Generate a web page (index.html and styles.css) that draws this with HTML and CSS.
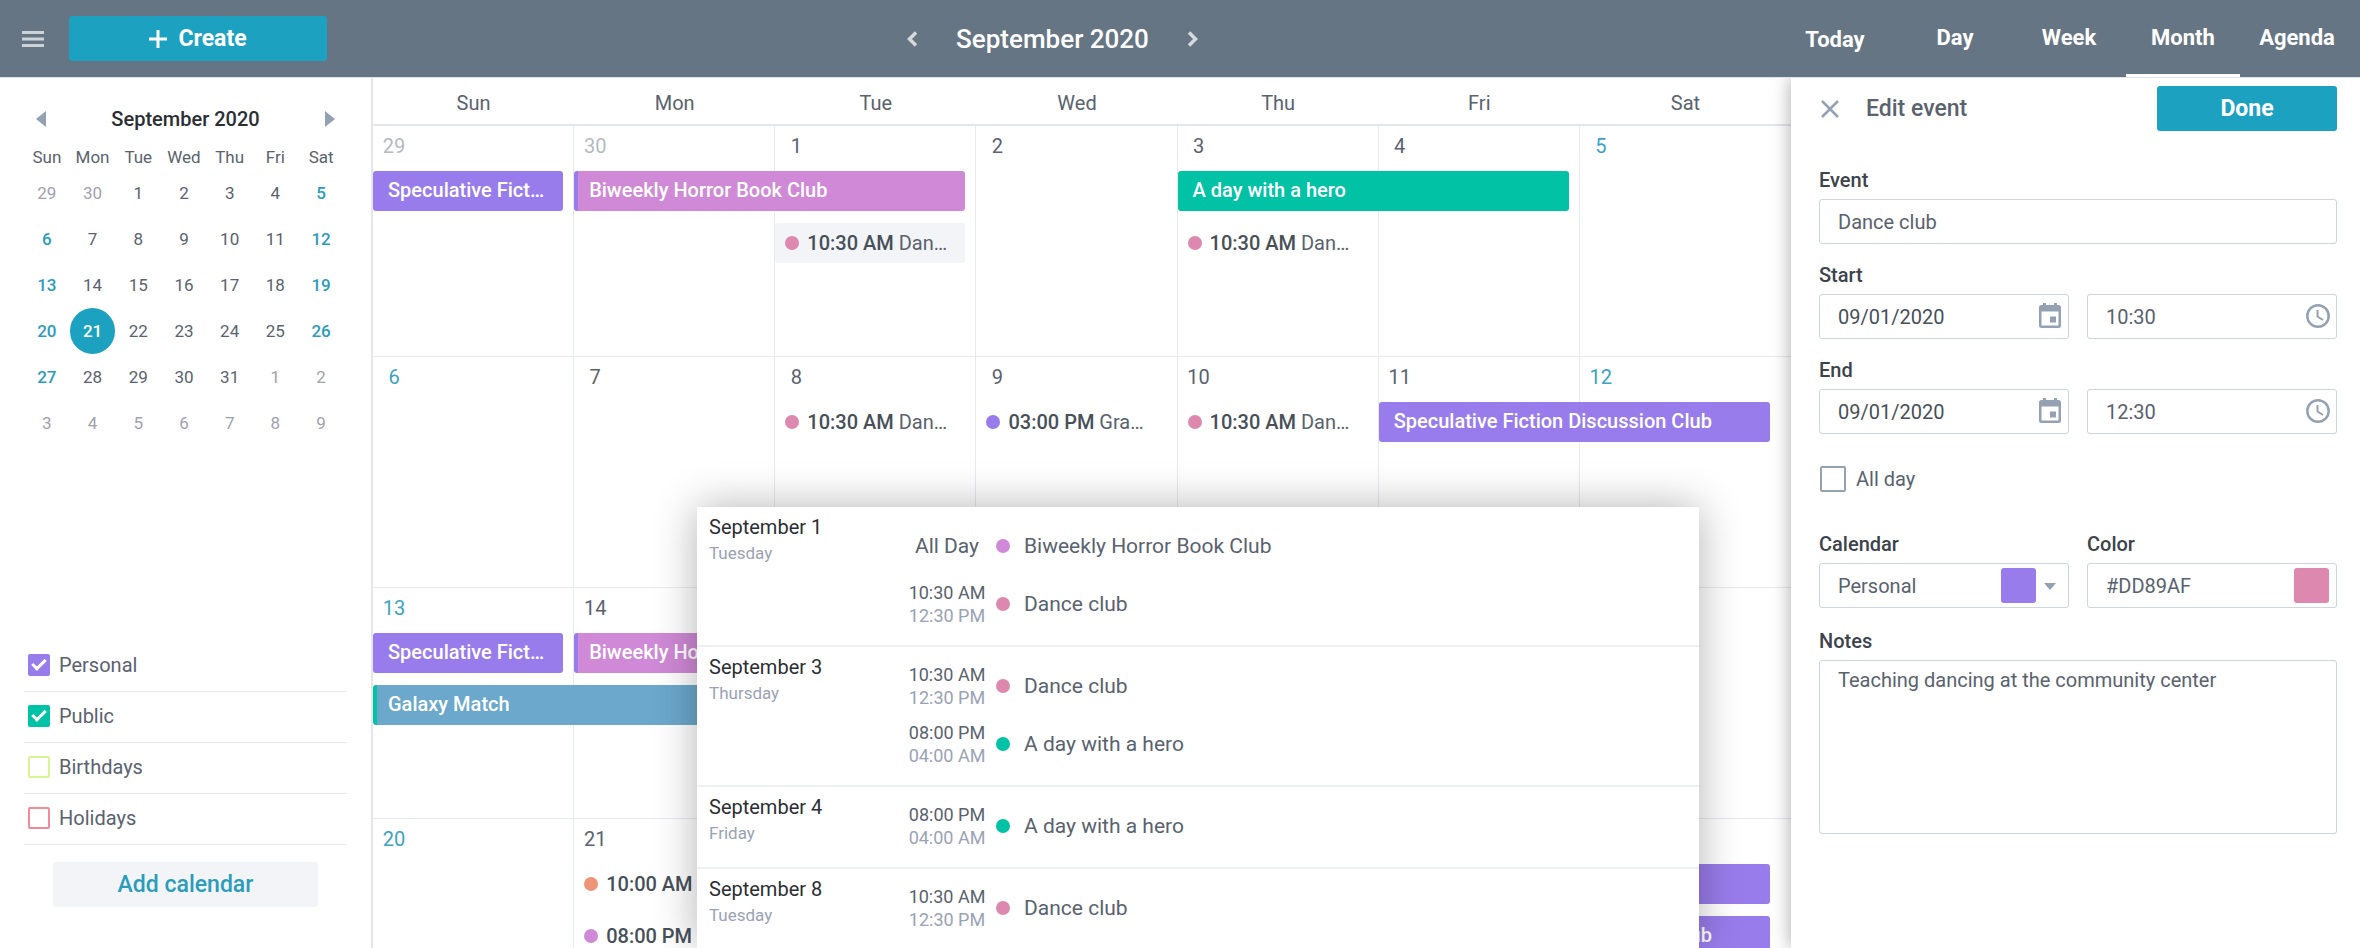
FILE: index.html
```html
<!DOCTYPE html>
<html lang="en">
<head>
<meta charset="UTF-8">
<meta name="viewport" content="width=device-width, initial-scale=1.0">
<title>Event Calendar</title>
<link rel="stylesheet" href="styles.css">
</head>
<body>
<header class="topbar">
  <button class="icon-btn menu-btn" aria-label="Toggle sidebar">
    <svg width="24" height="16" viewBox="0 0 24 16"><path d="M1 1.5h22M1 8h22M1 14.5h22" stroke="#cdd3d9" stroke-width="3"/></svg>
  </button>
  <button class="btn btn-create">
    <svg width="18" height="18" viewBox="0 0 18 18"><path d="M9 0v18M0 9h18" stroke="#fff" stroke-width="3"/></svg>
    Create
  </button>
  <div class="period">
    <button class="icon-btn" aria-label="Previous">
      <svg width="12" height="16" viewBox="0 0 12 16"><path d="M10 1.500L3.500 8l6.500 6.500" fill="none" stroke="#d5dade" stroke-width="3.500"/></svg>
    </button>
    <h1 class="period-title">September 2020</h1>
    <button class="icon-btn" aria-label="Next">
      <svg width="12" height="16" viewBox="0 0 12 16"><path d="M2 1.500L8.500 8 2 14.500" fill="none" stroke="#d5dade" stroke-width="3.500"/></svg>
    </button>
  </div>
  <button class="tab today-btn">Today</button>
  <nav class="tabs">
    <button class="tab">Day</button>
    <button class="tab">Week</button>
    <button class="tab active">Month</button>
    <button class="tab">Agenda</button>
  </nav>
</header>

<div class="layout">
  <aside class="sidebar">
    <section class="mini">
      <div class="mini-header">
        <button class="icon-btn" aria-label="Previous month">
          <svg width="10" height="16" viewBox="0 0 10 16"><path d="M10 0v16L0 8z" fill="#94a1b3"/></svg>
        </button>
        <span class="mini-title">September 2020</span>
        <button class="icon-btn" aria-label="Next month">
          <svg width="10" height="16" viewBox="0 0 10 16"><path d="M0 0v16l10-8z" fill="#94a1b3"/></svg>
        </button>
      </div>
      <table class="mini-table">
        <thead>
          <tr><th>Sun</th><th>Mon</th><th>Tue</th><th>Wed</th><th>Thu</th><th>Fri</th><th>Sat</th></tr>
        </thead>
        <tbody>
          <tr><td class="other">29</td><td class="other">30</td><td>1</td><td>2</td><td>3</td><td>4</td><td class="weekend">5</td></tr>
          <tr><td class="weekend">6</td><td>7</td><td>8</td><td>9</td><td>10</td><td>11</td><td class="weekend">12</td></tr>
          <tr><td class="weekend">13</td><td>14</td><td>15</td><td>16</td><td>17</td><td>18</td><td class="weekend">19</td></tr>
          <tr><td class="weekend">20</td><td class="selected">21</td><td>22</td><td>23</td><td>24</td><td>25</td><td class="weekend">26</td></tr>
          <tr><td class="weekend">27</td><td>28</td><td>29</td><td>30</td><td>31</td><td class="other">1</td><td class="other">2</td></tr>
          <tr><td class="other">3</td><td class="other">4</td><td class="other">5</td><td class="other">6</td><td class="other">7</td><td class="other">8</td><td class="other">9</td></tr>
        </tbody>
      </table>
    </section>

    <section class="calendars">
      <label class="calendar-item"><input type="checkbox" class="check check-purple" checked>Personal</label>
      <label class="calendar-item"><input type="checkbox" class="check check-green" checked>Public</label>
      <label class="calendar-item"><input type="checkbox" class="check check-lime">Birthdays</label>
      <label class="calendar-item"><input type="checkbox" class="check check-red">Holidays</label>
      <button class="btn btn-light">Add calendar</button>
    </section>
  </aside>

  <main class="month">
    <div class="weekdays">
      <div>Sun</div><div>Mon</div><div>Tue</div><div>Wed</div><div>Thu</div><div>Fri</div><div>Sat</div>
    </div>

    <div class="week">
      <div class="cell col-1 other"><span>29</span></div>
      <div class="cell col-2 other"><span>30</span></div>
      <div class="cell col-3"><span>1</span></div>
      <div class="cell col-4"><span>2</span></div>
      <div class="cell col-5"><span>3</span></div>
      <div class="cell col-6"><span>4</span></div>
      <div class="cell col-7 weekend"><span>5</span></div>
      <div class="bar slot-1 col-1 purple">Speculative Fiction Discussion Club</div>
      <div class="bar slot-1 col-2 span-2 violet">Biweekly Horror Book Club</div>
      <div class="bar slot-1 col-5 span-2 green">A day with a hero</div>
      <div class="event slot-2 col-3 active"><i class="dot pink"></i><p><b>10:30 AM</b> Dance club</p></div>
      <div class="event slot-2 col-5"><i class="dot pink"></i><p><b>10:30 AM</b> Dance club</p></div>
    </div>

    <div class="week">
      <div class="cell col-1 weekend"><span>6</span></div>
      <div class="cell col-2"><span>7</span></div>
      <div class="cell col-3"><span>8</span></div>
      <div class="cell col-4"><span>9</span></div>
      <div class="cell col-5"><span>10</span></div>
      <div class="cell col-6"><span>11</span></div>
      <div class="cell col-7 weekend"><span>12</span></div>
      <div class="event slot-1 col-3"><i class="dot pink"></i><p><b>10:30 AM</b> Dance club</p></div>
      <div class="event slot-1 col-4"><i class="dot purple"></i><p><b>03:00 PM</b> Grand opening</p></div>
      <div class="event slot-1 col-5"><i class="dot pink"></i><p><b>10:30 AM</b> Dance club</p></div>
      <div class="bar slot-1 col-6 span-2 purple">Speculative Fiction Discussion Club</div>
    </div>

    <div class="week">
      <div class="cell col-1 weekend"><span>13</span></div>
      <div class="cell col-2"><span>14</span></div>
      <div class="cell col-3"></div>
      <div class="cell col-4"></div>
      <div class="cell col-5"></div>
      <div class="cell col-6"></div>
      <div class="cell col-7"></div>
      <div class="bar slot-1 col-1 purple">Speculative Fiction Discussion Club</div>
      <div class="bar slot-1 col-2 span-2 violet">Biweekly Horror Book Club</div>
      <div class="bar slot-2 col-1 span-3 blue">Galaxy Match</div>
    </div>

    <div class="week">
      <div class="cell col-1 weekend"><span>20</span></div>
      <div class="cell col-2"><span>21</span></div>
      <div class="cell col-3"></div>
      <div class="cell col-4"></div>
      <div class="cell col-5"></div>
      <div class="cell col-6"></div>
      <div class="cell col-7"></div>
      <div class="event slot-1 col-2"><i class="dot orange"></i><p><b>10:00 AM</b></p></div>
      <div class="event slot-2 col-2"><i class="dot violet"></i><p><b>08:00 PM</b></p></div>
      <div class="bar slot-1 col-5 span-3 purple"></div>
      <div class="bar slot-2 col-6 span-2 purple">Speculative Fiction Discussion Club</div>
    </div>

    <!-- agenda list over the month grid -->
    <div class="agenda">
      <section class="agenda-day">
        <div class="agenda-date"><h2>September 1</h2><p>Tuesday</p></div>
        <ul class="agenda-list">
          <li><div class="time all-day">All Day</div><i class="dot violet"></i>Biweekly Horror Book Club</li>
          <li><div class="time">10:30 AM<small>12:30 PM</small></div><i class="dot pink"></i>Dance club</li>
        </ul>
      </section>
      <section class="agenda-day">
        <div class="agenda-date"><h2>September 3</h2><p>Thursday</p></div>
        <ul class="agenda-list">
          <li><div class="time">10:30 AM<small>12:30 PM</small></div><i class="dot pink"></i>Dance club</li>
          <li><div class="time">08:00 PM<small>04:00 AM</small></div><i class="dot green"></i>A day with a hero</li>
        </ul>
      </section>
      <section class="agenda-day">
        <div class="agenda-date"><h2>September 4</h2><p>Friday</p></div>
        <ul class="agenda-list">
          <li><div class="time">08:00 PM<small>04:00 AM</small></div><i class="dot green"></i>A day with a hero</li>
        </ul>
      </section>
      <section class="agenda-day">
        <div class="agenda-date"><h2>September 8</h2><p>Tuesday</p></div>
        <ul class="agenda-list">
          <li><div class="time">10:30 AM<small>12:30 PM</small></div><i class="dot pink"></i>Dance club</li>
        </ul>
      </section>
    </div>
  </main>

  <form class="editor">
    <div class="editor-header">
      <button type="button" class="icon-btn" aria-label="Close">
        <svg width="18" height="18" viewBox="0 0 18 18"><path d="M1 1l16 16M17 1L1 17" stroke="#94a1b3" stroke-width="2.500"/></svg>
      </button>
      <h2 class="editor-title">Edit event</h2>
      <button type="button" class="btn btn-done">Done</button>
    </div>

    <div class="field wide">
      <label for="event-name">Event</label>
      <input type="text" id="event-name" class="input" value="Dance club">
    </div>

    <div class="field">
      <label for="start-date">Start</label>
      <div class="control">
        <input type="text" id="start-date" class="input dark" value="09/01/2020">
        <svg class="icon-date" width="22" height="25" viewBox="0 0 22 25"><path fill="#94a1b3" fill-rule="evenodd" d="M4 0h3v2h8V0h3v2h1.500a2.500 2.500 0 0 1 2.500 2.500v18a2.500 2.500 0 0 1-2.500 2.500h-17A2.500 2.500 0 0 1 0 22.500v-18A2.500 2.500 0 0 1 2.500 2H4zM2.500 8.500V22.500h17V8.500zM11 13.500h6v6h-6z"/></svg>
      </div>
    </div>
    <div class="field">
      <div class="control">
        <input type="text" class="input" aria-label="Start time" value="10:30">
        <svg class="icon-time" width="24" height="24" viewBox="0 0 24 24"><circle cx="12" cy="12" r="10.700" fill="none" stroke="#94a1b3" stroke-width="2.500"/><path d="M11.500 6v6.500l5.500 3.500" fill="none" stroke="#94a1b3" stroke-width="2"/></svg>
      </div>
    </div>

    <div class="field">
      <label for="end-date">End</label>
      <div class="control">
        <input type="text" id="end-date" class="input dark" value="09/01/2020">
        <svg class="icon-date" width="22" height="25" viewBox="0 0 22 25"><path fill="#94a1b3" fill-rule="evenodd" d="M4 0h3v2h8V0h3v2h1.500a2.500 2.500 0 0 1 2.500 2.500v18a2.500 2.500 0 0 1-2.500 2.500h-17A2.500 2.500 0 0 1 0 22.500v-18A2.500 2.500 0 0 1 2.500 2H4zM2.500 8.500V22.500h17V8.500zM11 13.500h6v6h-6z"/></svg>
      </div>
    </div>
    <div class="field">
      <div class="control">
        <input type="text" class="input" aria-label="End time" value="12:30">
        <svg class="icon-time" width="24" height="24" viewBox="0 0 24 24"><circle cx="12" cy="12" r="10.700" fill="none" stroke="#94a1b3" stroke-width="2.500"/><path d="M11.500 6v6.500l5.500 3.500" fill="none" stroke="#94a1b3" stroke-width="2"/></svg>
      </div>
    </div>

    <label class="all-day-field"><input type="checkbox" class="check check-grey">All day</label>

    <div class="field">
      <label for="calendar">Calendar</label>
      <div class="control">
        <select id="calendar" class="input">
          <option>Personal</option>
          <option>Public</option>
          <option>Birthdays</option>
          <option>Holidays</option>
        </select>
        <span class="swatch swatch-select purple"></span>
        <svg class="icon-arrow" width="12" height="7" viewBox="0 0 12 7"><path d="M0 0h12L6 7z" fill="#94a1b3"/></svg>
      </div>
    </div>
    <div class="field">
      <label for="color">Color</label>
      <div class="control">
        <input type="text" id="color" class="input" value="#DD89AF">
        <span class="swatch pink"></span>
      </div>
    </div>

    <div class="field wide">
      <label for="notes">Notes</label>
      <textarea id="notes" class="input">Teaching dancing at the community center</textarea>
    </div>
  </form>
</div>
</body>
</html>
```
FILE: styles.css
```css
* {
  box-sizing: border-box;
}

body {
  margin: 0;
  height: 100vh;
  display: flex;
  flex-direction: column;
  overflow: hidden;
  font-family: Roboto, "Liberation Sans", sans-serif;
  font-size: 20px;
  line-height: 24px;
  color: #59626e;
  background: #fff;
}

h1, h2, p, ul {
  margin: 0;
  padding: 0;
  font-weight: 400;
}

button, input, select, textarea {
  font-family: inherit;
  font-size: inherit;
  color: inherit;
}

button {
  border: none;
  background: none;
  padding: 0;
  cursor: pointer;
}

svg {
  display: block;
}

.icon-btn {
  padding: 4px;
}

.btn {
  height: 45px;
  display: flex;
  align-items: center;
  justify-content: center;
  gap: 11px;
  border-radius: 3px;
  font-size: 23px;
  font-weight: 700;
  color: #fff;
  background: #1ca1c1;
}

/* colors */
.purple { background: #997ceb; }
.violet { background: #cf89d6; }
.green { background: #01c2a5; }
.blue { background: #6ba8cc; }
.pink { background: #dd89af; }
.orange { background: #ee9478; }

/* top bar */
.topbar {
  position: relative;
  z-index: 1;
  display: flex;
  align-items: center;
  flex: none;
  height: 78px;
  padding: 0 6px 0 17px;
  background: #657583;
  border-bottom: 1px solid #dfe5eb;
  color: #fff;
}

.menu-btn {
  margin-right: 20px;
}

.btn-create {
  width: 258px;
}

.period {
  flex: 1;
  display: flex;
  align-items: center;
  justify-content: center;
  gap: 34px;
}

.period-title {
  font-size: 26px;
  font-weight: 500;
}

.tabs {
  display: flex;
  height: 100%;
}

.tab {
  width: 114px;
  height: 100%;
  padding-top: 1px;
  border-bottom: 3px solid transparent;
  font-size: 22px;
  font-weight: 700;
}

.tab.active {
  border-color: #fff;
}

.today-btn {
  margin-right: 6px;
  padding-top: 4px;
}

/* sidebar */
.layout {
  flex: 1;
  min-height: 0;
  display: flex;
}

.sidebar {
  width: 373px;
  flex: none;
  display: flex;
  flex-direction: column;
  justify-content: space-between;
  padding: 24px 24px 41px;
  border-right: 2px solid #e4e6ea;
}

.mini {
  width: 320px;
}

.mini-header {
  display: flex;
  align-items: center;
  justify-content: space-between;
  height: 34px;
  padding: 0 5px 0 8px;
}

.mini-title {
  font-weight: 500;
  color: #2b2e33;
}

.mini-table {
  width: 100%;
  margin-top: 8px;
  table-layout: fixed;
  border-collapse: collapse;
  font-size: 17px;
  text-align: center;
}

.mini-table th {
  height: 26px;
  padding: 0;
  font-weight: 400;
}

.mini-table td {
  height: 46px;
  padding: 0;
}

.mini-table .other {
  color: #9fa1ae;
}

.mini-table .weekend {
  font-weight: 500;
  color: #2b9cbc;
}

.mini-table .selected {
  font-weight: 500;
  color: #fff;
  border-radius: 50%;
  background: #1ca1c1;
}

.calendar-item {
  display: flex;
  align-items: center;
  gap: 9px;
  height: 51px;
  padding: 0 4px 2px;
  border-bottom: 1px solid #e8eaee;
}

.check {
  appearance: none;
  flex: none;
  width: 22px;
  height: 22px;
  margin: 0;
  border: 2px solid;
  border-radius: 2px;
}

.check:checked::after {
  content: "";
  display: block;
  width: 11px;
  height: 5px;
  margin: 3px 2px;
  border-left: 3px solid #fff;
  border-bottom: 3px solid #fff;
  transform: rotate(-45deg);
}

.check-purple { border-color: #997ceb; background: #997ceb; }
.check-green { border-color: #01c2a5; background: #01c2a5; }
.check-lime { border-color: #d9f593; }
.check-red { border-color: #f3899b; }
.check-grey { border-color: #94a1b3; }

.btn-light {
  width: 265px;
  margin: 17px 29px 0;
  font-weight: 500;
  color: #2b9cbc;
  background: #f3f4f8;
}

/* month grid */
.month {
  flex: 1;
  min-width: 0;
  position: relative;
  overflow: hidden;
}

.weekdays {
  display: grid;
  grid-template-columns: repeat(7, minmax(0, 1fr));
  align-items: center;
  height: 48px;
  padding: 3px 10px 0 0;
  border-bottom: 2px solid #e4e6ea;
  text-align: center;
}

.weekdays div:last-child {
  margin-right: -10px;
}

.week {
  display: grid;
  grid-template-columns: repeat(7, minmax(0, 1fr));
  grid-template-rows: 33px 40px 40px 1fr;
  row-gap: 12px;
  min-height: 231px;
  padding-right: 10px;
  border-bottom: 1px solid #e8eaee;
}

.cell {
  grid-row: 1 / -1;
  border-right: 1px solid #e8eaee;
}

.cell span {
  display: block;
  width: 42px;
  line-height: 40px;
  text-align: center;
}

.cell.other { color: #b4bac1; }
.cell.weekend { color: #3aa3c2; }
.cell.col-7 { border-right: none; }

.col-1 { grid-column: 1; }
.col-2 { grid-column: 2; }
.col-3 { grid-column: 3; }
.col-4 { grid-column: 4; }
.col-5 { grid-column: 5; }
.col-6 { grid-column: 6; }
.col-7 { grid-column: 7; }
.span-2 { grid-column-end: span 2; }
.span-3 { grid-column-end: span 3; }
.slot-1 { grid-row: 2; }
.slot-2 { grid-row: 3; }

.bar {
  margin-right: 11px;
  padding: 0 16px 0 11px;
  border-left: 4px solid transparent;
  border-radius: 3px;
  line-height: 38px;
  font-weight: 500;
  color: #fff;
  overflow: hidden;
  white-space: nowrap;
  text-overflow: ellipsis;
}

.bar.purple, .bar.violet { border-left-color: #997ceb; }
.bar.green, .bar.blue { border-left-color: #01c2a5; }

.event {
  display: flex;
  align-items: center;
  gap: 8px;
  margin-right: 11px;
  padding: 0 15px 1px 10px;
  border-radius: 3px;
}

.event.active {
  background: #f3f4f8;
}

.event p {
  line-height: 38px;
  overflow: hidden;
  white-space: nowrap;
  text-overflow: ellipsis;
}

.event b {
  font-weight: 500;
  color: #475058;
}

.dot {
  flex: none;
  width: 14px;
  height: 14px;
  border-radius: 50%;
}

/* agenda */
.agenda {
  position: absolute;
  top: 429px;
  left: 324px;
  right: 92px;
  bottom: 0;
  background: #fff;
  box-shadow: 0 0 40px rgba(0, 0, 0, 0.3);
}

.agenda-day {
  display: flex;
  padding: 8px 12px 12px;
  border-bottom: 2px solid #eff0f3;
}

.agenda-day:last-child {
  border-bottom: none;
}

.agenda-date {
  width: 194px;
}

.agenda-date h2 {
  font-size: 20px;
  color: #2b2e33;
}

.agenda-date p {
  margin-top: 2px;
  font-size: 17px;
  color: #9aa2b5;
}

.agenda-list {
  padding-top: 2px;
  font-size: 21px;
  list-style: none;
}

.agenda-list li {
  display: flex;
  align-items: center;
  height: 58px;
}

.agenda-list .dot {
  margin: 0 14px 0 5px;
}

.time {
  width: 88px;
  text-align: center;
  font-size: 18px;
  line-height: 23px;
}

.time small {
  display: block;
  font-size: 18px;
  color: #9aa2b5;
}

.time.all-day {
  font-size: 21px;
}

/* event editor */
.editor {
  position: relative;
  width: 569px;
  flex: none;
  display: grid;
  grid-template-columns: 1fr 1fr;
  align-content: start;
  align-items: end;
  gap: 19px 18px;
  padding: 8px 23px 20px 28px;
  background: #fff;
  box-shadow: 0 0 18px rgba(0, 0, 0, 0.35);
}

.wide {
  grid-column: 1 / -1;
  margin-top: 2px;
}

.editor-header {
  grid-column: 1 / -1;
  display: flex;
  align-items: center;
  margin-bottom: 16px;
}

.editor-header .icon-btn {
  padding: 2px;
}

.editor-title {
  flex: 1;
  margin-left: 25px;
  font-size: 23px;
  font-weight: 500;
}

.btn-done {
  width: 180px;
}

.field {
  min-width: 0;
}

.field label {
  display: block;
  margin-bottom: 7px;
  font-weight: 500;
  color: #3c434b;
}

.control {
  position: relative;
}

.input {
  appearance: none;
  display: block;
  width: 100%;
  height: 45px;
  padding: 0 18px;
  border: 1px solid #ccd5e0;
  border-radius: 3px;
  background: #fff;
  outline: none;
}

.input.dark {
  color: #475058;
}

textarea.input {
  height: 174px;
  padding: 7px 18px;
  line-height: 24px;
  resize: none;
}

.icon-date, .icon-time, .icon-arrow, .swatch {
  position: absolute;
  pointer-events: none;
}

.icon-date {
  top: 9px;
  right: 8px;
}

.icon-time {
  top: 10px;
  right: 7px;
}

.icon-arrow {
  top: 20px;
  right: 13px;
}

.swatch {
  top: 5px;
  right: 8px;
  width: 35px;
  height: 35px;
  border-radius: 3px;
}

.swatch-select {
  right: 33px;
}

.all-day-field {
  grid-column: 1 / -1;
  display: flex;
  align-items: center;
  gap: 10px;
  padding: 13px 1px 21px;
}

.all-day-field .check {
  width: 26px;
  height: 26px;
}
```
